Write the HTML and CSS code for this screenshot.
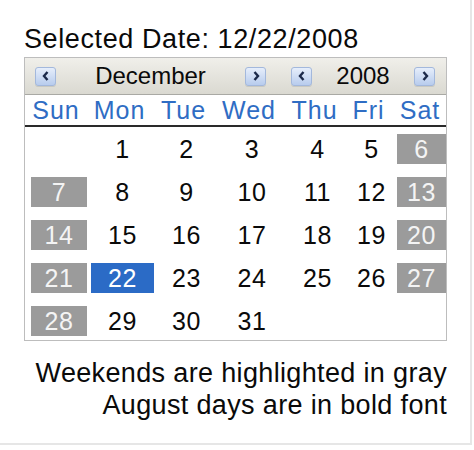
FILE: index.html
```html
<!DOCTYPE html>
<html>
<head>
<meta charset="utf-8">
<link rel="stylesheet" href="styles.css">
</head>
<body>
<div class="panel">
  <div class="title">Selected Date: 12/22/2008</div>
  <div class="calendar">
    <div class="nav">
      <button class="navbtn" aria-label="Previous month"><svg width="10" height="12" viewBox="0 0 10 12"><polyline points="6.5,2 3,6 6.5,10" fill="none" stroke="#1c2a4a" stroke-width="2.4"/></svg></button>
      <div class="navlabel">December</div>
      <button class="navbtn" aria-label="Next month"><svg width="10" height="12" viewBox="0 0 10 12"><polyline points="3.5,2 7,6 3.5,10" fill="none" stroke="#1c2a4a" stroke-width="2.4"/></svg></button>
      <div class="navspacer"></div>
      <button class="navbtn" aria-label="Previous year"><svg width="10" height="12" viewBox="0 0 10 12"><polyline points="6.5,2 3,6 6.5,10" fill="none" stroke="#1c2a4a" stroke-width="2.4"/></svg></button>
      <div class="navlabel">2008</div>
      <button class="navbtn" aria-label="Next year"><svg width="10" height="12" viewBox="0 0 10 12"><polyline points="3.5,2 7,6 3.5,10" fill="none" stroke="#1c2a4a" stroke-width="2.4"/></svg></button>
    </div>
    <div class="weekdays">
      <div>Sun</div><div>Mon</div><div>Tue</div><div>Wed</div><div>Thu</div><div>Fri</div><div>Sat</div>
    </div>
    <div class="days">
      <div class="day"></div><div class="day">1</div><div class="day">2</div><div class="day">3</div><div class="day">4</div><div class="day">5</div><div class="day weekend">6</div>
      <div class="day weekend">7</div><div class="day">8</div><div class="day">9</div><div class="day">10</div><div class="day">11</div><div class="day">12</div><div class="day weekend">13</div>
      <div class="day weekend">14</div><div class="day">15</div><div class="day">16</div><div class="day">17</div><div class="day">18</div><div class="day">19</div><div class="day weekend">20</div>
      <div class="day weekend">21</div><div class="day selected">22</div><div class="day">23</div><div class="day">24</div><div class="day">25</div><div class="day">26</div><div class="day weekend">27</div>
      <div class="day weekend">28</div><div class="day">29</div><div class="day">30</div><div class="day">31</div><div class="day"></div><div class="day"></div><div class="day"></div>
    </div>
  </div>
  <div class="notes">
    <div>Weekends are highlighted in gray</div>
    <div>August days are in bold font</div>
  </div>
</div>
</body>
</html>
```

FILE: styles.css
```css
html, body {
  margin: 0;
  padding: 0;
  background: #ffffff;
}
body {
  font-family: "Liberation Sans", Arial, sans-serif;
  color: #0a0a0a;
}
.panel {
  box-sizing: border-box;
  width: 472px;
  height: 445px;
  padding: 24px 0 0 24px;
  border-right: 2px solid #e6e6e6;
  border-bottom: 2px solid #e6e6e6;
}
.title {
  font-size: 27px;
  line-height: 30px;
  letter-spacing: 0.6px;
  height: 33px;
}
.calendar {
  box-sizing: border-box;
  width: 423px;
  border: 1px solid #bdbdbd;
  background: #fff;
}
.nav {
  display: grid;
  grid-template-columns: 21px 189px 21px 25px 21px 102px 21px;
  align-items: center;
  height: 36px;
  padding-left: 10px;
  background: linear-gradient(#f0efea, #dad9d1);
  border-bottom: 1px solid #a9a9a4;
}
.navbtn {
  box-sizing: border-box;
  width: 21px;
  height: 19px;
  padding: 0;
  margin: 0;
  display: flex;
  align-items: center;
  justify-content: center;
  border: 1px solid #a3b8dc;
  border-radius: 3px;
  background: linear-gradient(#e6eefb, #b8cced);
  box-shadow: 0 1px 0 #c9c9c2;
}
.navbtn svg { display: block; }
.navlabel {
  text-align: center;
  font-size: 24px;
  line-height: 30px;
}
.weekdays {
  display: grid;
  grid-template-columns: 56px 63px 57px 66px 57px 43px 1fr;
  column-gap: 4px;
  padding-left: 3px;
  height: 30px;
  align-items: center;
  border-bottom: 2px solid #2a2a2a;
  color: #2f6dc4;
  font-size: 25px;
  letter-spacing: 1px;
  line-height: 30px;
}
.weekdays div { text-align: center; }
.days {
  display: grid;
  grid-template-columns: 56px 63px 57px 66px 57px 43px 1fr;
  grid-auto-rows: 30px;
  column-gap: 4px;
  row-gap: 13px;
  padding: 7px 0 4px 6px;
}
.day {
  display: flex;
  align-items: center;
  justify-content: center;
  font-size: 25px;
  letter-spacing: 0.5px;
}
.day.weekend {
  background: #9b9b9b;
  color: #f4f4f4;
}
.day.selected {
  background: #2b6bc6;
  color: #ffffff;
}
.notes {
  width: 423px;
  margin-top: 16px;
  text-align: right;
  font-size: 27px;
  line-height: 32px;
  letter-spacing: 0.35px;
}
```
